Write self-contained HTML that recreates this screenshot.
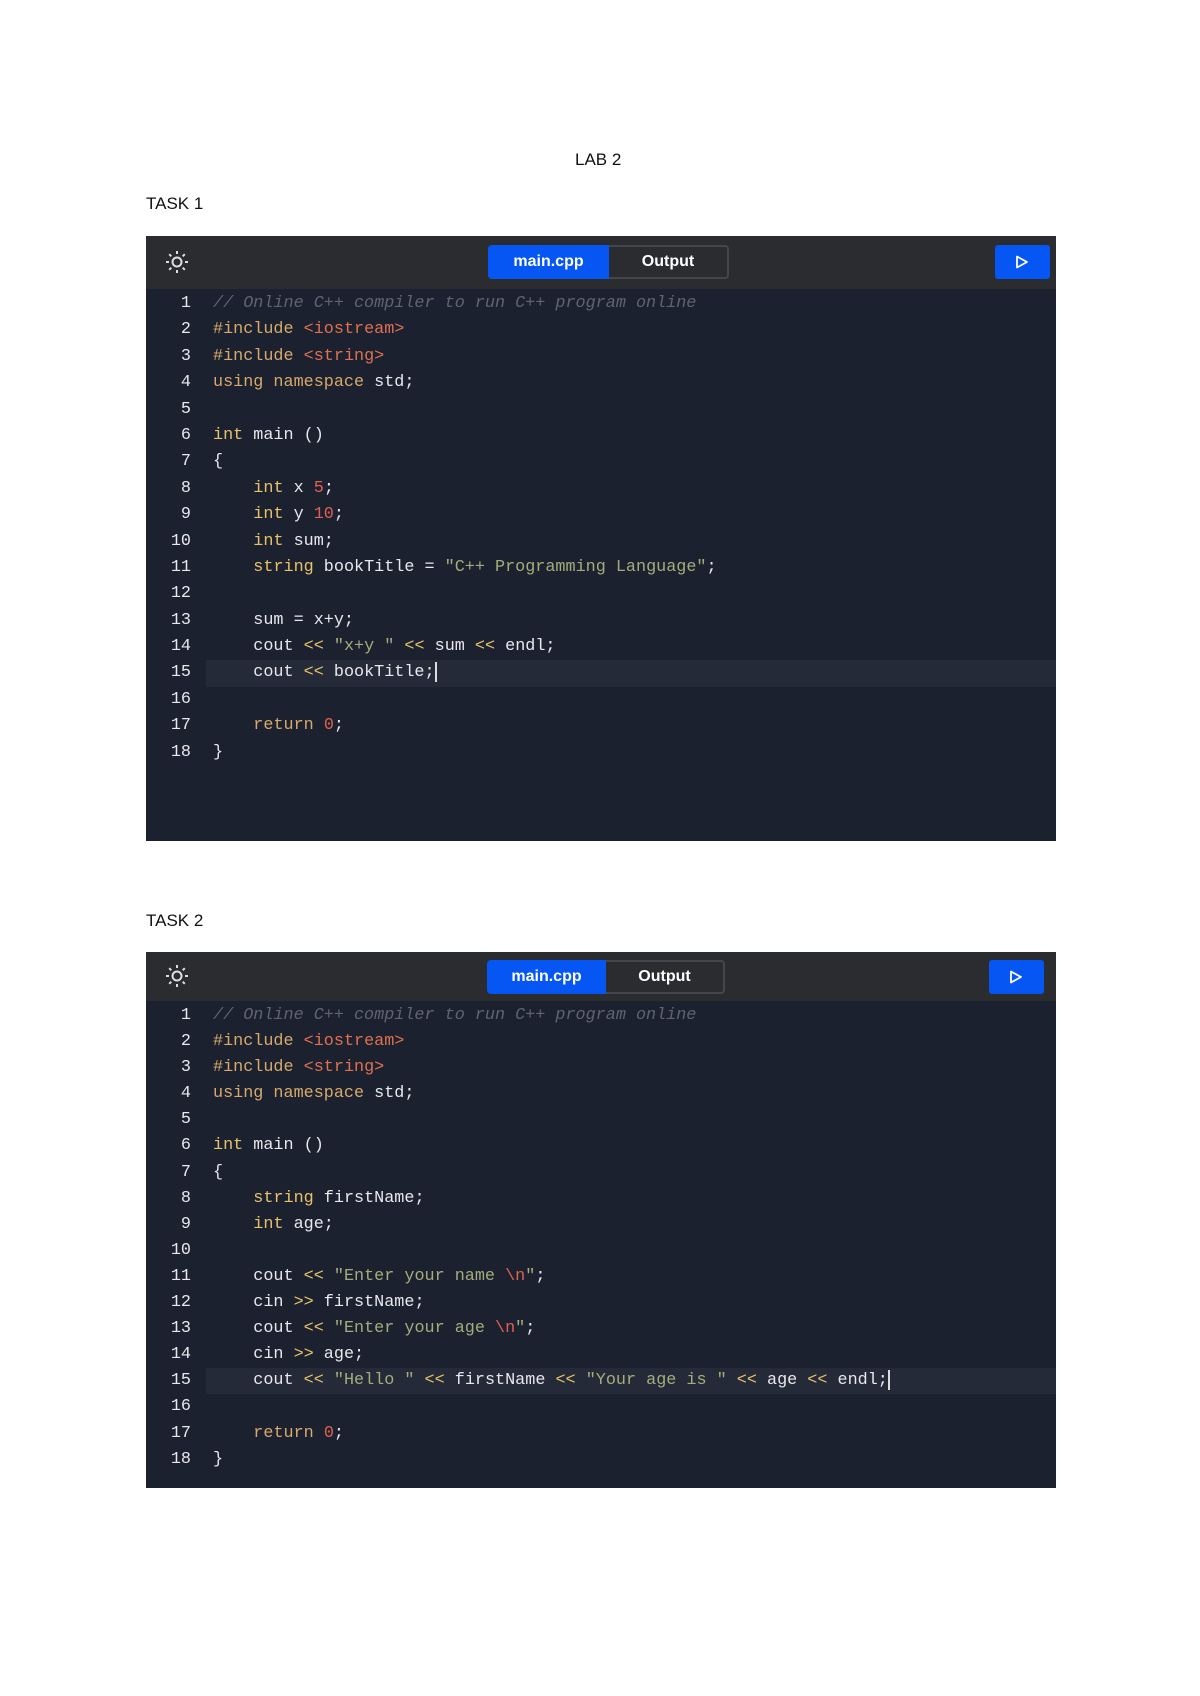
<!DOCTYPE html>
<html><head><meta charset="utf-8"><style>
body{margin:0;width:1200px;height:1696px;background:#fff;position:relative;font-family:"Liberation Sans",sans-serif;overflow:hidden}
.t{position:absolute;font-size:17px;color:#111}
.box{position:absolute;left:146px;width:910px;background:#1c2130;overflow:hidden}
.hdr{position:absolute;left:0;top:0;width:100%;background:#2b2c30}
.tab{position:absolute;height:34px;line-height:34px;text-align:center;color:#fff;font-size:16px;font-weight:bold;box-sizing:border-box}
.tab.a{background:#0556f3;border-radius:4px 0 0 4px}
.tab.o{border:2px solid #45464b;border-left:none;border-radius:0 4px 4px 0;background:#2b2c30;line-height:30px}
.run{position:absolute;width:55px;height:34px;background:#0556f3;border-radius:3px}
.code{position:absolute;left:0;width:100%;font-family:"Liberation Mono",monospace;font-size:16.8px;color:#e8e8ec}
.ln{position:relative;height:26.4px;line-height:26.4px;white-space:pre}
.b2 .ln{height:26.1px;line-height:26.1px}
.ln .n{position:absolute;left:0;width:45px;text-align:right;color:#e8e8ec}
.ln .c{position:absolute;left:67px}
.hl{background:#252a38;margin-left:60px}
.hl .n{left:-60px}
.hl .c{left:7px}
.cm{color:#5f6470;font-style:italic}.pp{color:#d7a96a}.inc{color:#e0704f}.kw{color:#e6c26a}.nu{color:#e0604f}.st{color:#a3ad7a}
.cur{display:inline-block;width:2px;height:20px;background:#ddd;vertical-align:middle}
</style></head><body>
<div class="t" style="left:575px;top:150px">LAB 2</div>
<div class="t" style="left:146px;top:194px">TASK 1</div>
<div class="t" style="left:146px;top:911px">TASK 2</div>

<div class="box" style="top:236px;height:605px">
 <div class="hdr" style="height:53px"></div>
 <svg style="position:absolute;left:19px;top:14px" width="24" height="24" viewBox="0 0 24 24" fill="none" stroke="#ddd" stroke-width="2"><circle cx="12" cy="12" r="4.5"/><path d="M12 1v3M12 20v3M1 12h3M20 12h3M4.2 4.2l2.1 2.1M17.7 17.7l2.1 2.1M4.2 19.8l2.1-2.1M17.7 6.3l2.1-2.1"/></svg>
 <div class="tab a" style="left:342px;top:9px;width:121px">main.cpp</div>
 <div class="tab o" style="left:463px;top:9px;width:120px">Output</div>
 <div class="run" style="left:849px;top:9px"><svg style="position:absolute;left:20px;top:10px" width="14" height="14" viewBox="0 0 14 14"><path d="M2 1.5L12 7L2 12.5Z" fill="none" stroke="#fff" stroke-width="1.8" stroke-linejoin="round"/></svg></div>
 <div class="code" style="top:55px"><div class="ln"><span class="n">1</span><span class="c cm">// Online C++ compiler to run C++ program online</span></div><div class="ln"><span class="n">2</span><span class="c"><span class="pp">#include</span> <span class="inc">&lt;iostream&gt;</span></span></div><div class="ln"><span class="n">3</span><span class="c"><span class="pp">#include</span> <span class="inc">&lt;string&gt;</span></span></div><div class="ln"><span class="n">4</span><span class="c"><span class="pp">using namespace</span> std;</span></div><div class="ln"><span class="n">5</span><span class="c"></span></div><div class="ln"><span class="n">6</span><span class="c"><span class="kw">int</span> main ()</span></div><div class="ln"><span class="n">7</span><span class="c">{</span></div><div class="ln"><span class="n">8</span><span class="c">    <span class="kw">int</span> x <span class="nu">5</span>;</span></div><div class="ln"><span class="n">9</span><span class="c">    <span class="kw">int</span> y <span class="nu">10</span>;</span></div><div class="ln"><span class="n">10</span><span class="c">    <span class="kw">int</span> sum;</span></div><div class="ln"><span class="n">11</span><span class="c">    <span class="kw">string</span> bookTitle = <span class="st">"C++ Programming Language"</span>;</span></div><div class="ln"><span class="n">12</span><span class="c"></span></div><div class="ln"><span class="n">13</span><span class="c">    sum = x+y;</span></div><div class="ln"><span class="n">14</span><span class="c">    cout <span class="kw">&lt;&lt;</span> <span class="st">"x+y "</span> <span class="kw">&lt;&lt;</span> sum <span class="kw">&lt;&lt;</span> endl;</span></div><div class="ln hl"><span class="n">15</span><span class="c">    cout <span class="kw">&lt;&lt;</span> bookTitle;<span class="cur"></span></span></div><div class="ln"><span class="n">16</span><span class="c"></span></div><div class="ln"><span class="n">17</span><span class="c">    <span class="pp">return</span> <span class="nu">0</span>;</span></div><div class="ln"><span class="n">18</span><span class="c">}</span></div></div>
</div>

<div class="box b2" style="top:952px;height:536px">
 <div class="hdr" style="height:49px"></div>
 <svg style="position:absolute;left:19px;top:12px" width="24" height="24" viewBox="0 0 24 24" fill="none" stroke="#ddd" stroke-width="2"><circle cx="12" cy="12" r="4.5"/><path d="M12 1v3M12 20v3M1 12h3M20 12h3M4.2 4.2l2.1 2.1M17.7 17.7l2.1 2.1M4.2 19.8l2.1-2.1M17.7 6.3l2.1-2.1"/></svg>
 <div class="tab a" style="left:341px;top:8px;width:119px">main.cpp</div>
 <div class="tab o" style="left:460px;top:8px;width:119px">Output</div>
 <div class="run" style="left:843px;top:8px"><svg style="position:absolute;left:20px;top:10px" width="14" height="14" viewBox="0 0 14 14"><path d="M2 1.5L12 7L2 12.5Z" fill="none" stroke="#fff" stroke-width="1.8" stroke-linejoin="round"/></svg></div>
 <div class="code" style="top:51px"><div class="ln"><span class="n">1</span><span class="c cm">// Online C++ compiler to run C++ program online</span></div><div class="ln"><span class="n">2</span><span class="c"><span class="pp">#include</span> <span class="inc">&lt;iostream&gt;</span></span></div><div class="ln"><span class="n">3</span><span class="c"><span class="pp">#include</span> <span class="inc">&lt;string&gt;</span></span></div><div class="ln"><span class="n">4</span><span class="c"><span class="pp">using namespace</span> std;</span></div><div class="ln"><span class="n">5</span><span class="c"></span></div><div class="ln"><span class="n">6</span><span class="c"><span class="kw">int</span> main ()</span></div><div class="ln"><span class="n">7</span><span class="c">{</span></div><div class="ln"><span class="n">8</span><span class="c">    <span class="kw">string</span> firstName;</span></div><div class="ln"><span class="n">9</span><span class="c">    <span class="kw">int</span> age;</span></div><div class="ln"><span class="n">10</span><span class="c"></span></div><div class="ln"><span class="n">11</span><span class="c">    cout <span class="kw">&lt;&lt;</span> <span class="st">"Enter your name <span class="nu">\n</span>"</span>;</span></div><div class="ln"><span class="n">12</span><span class="c">    cin <span class="kw">&gt;&gt;</span> firstName;</span></div><div class="ln"><span class="n">13</span><span class="c">    cout <span class="kw">&lt;&lt;</span> <span class="st">"Enter your age <span class="nu">\n</span>"</span>;</span></div><div class="ln"><span class="n">14</span><span class="c">    cin <span class="kw">&gt;&gt;</span> age;</span></div><div class="ln hl"><span class="n">15</span><span class="c">    cout <span class="kw">&lt;&lt;</span> <span class="st">"Hello "</span> <span class="kw">&lt;&lt;</span> firstName <span class="kw">&lt;&lt;</span> <span class="st">"Your age is "</span> <span class="kw">&lt;&lt;</span> age <span class="kw">&lt;&lt;</span> endl;<span class="cur"></span></span></div><div class="ln"><span class="n">16</span><span class="c"></span></div><div class="ln"><span class="n">17</span><span class="c">    <span class="pp">return</span> <span class="nu">0</span>;</span></div><div class="ln"><span class="n">18</span><span class="c">}</span></div></div>
</div>
</body></html>
